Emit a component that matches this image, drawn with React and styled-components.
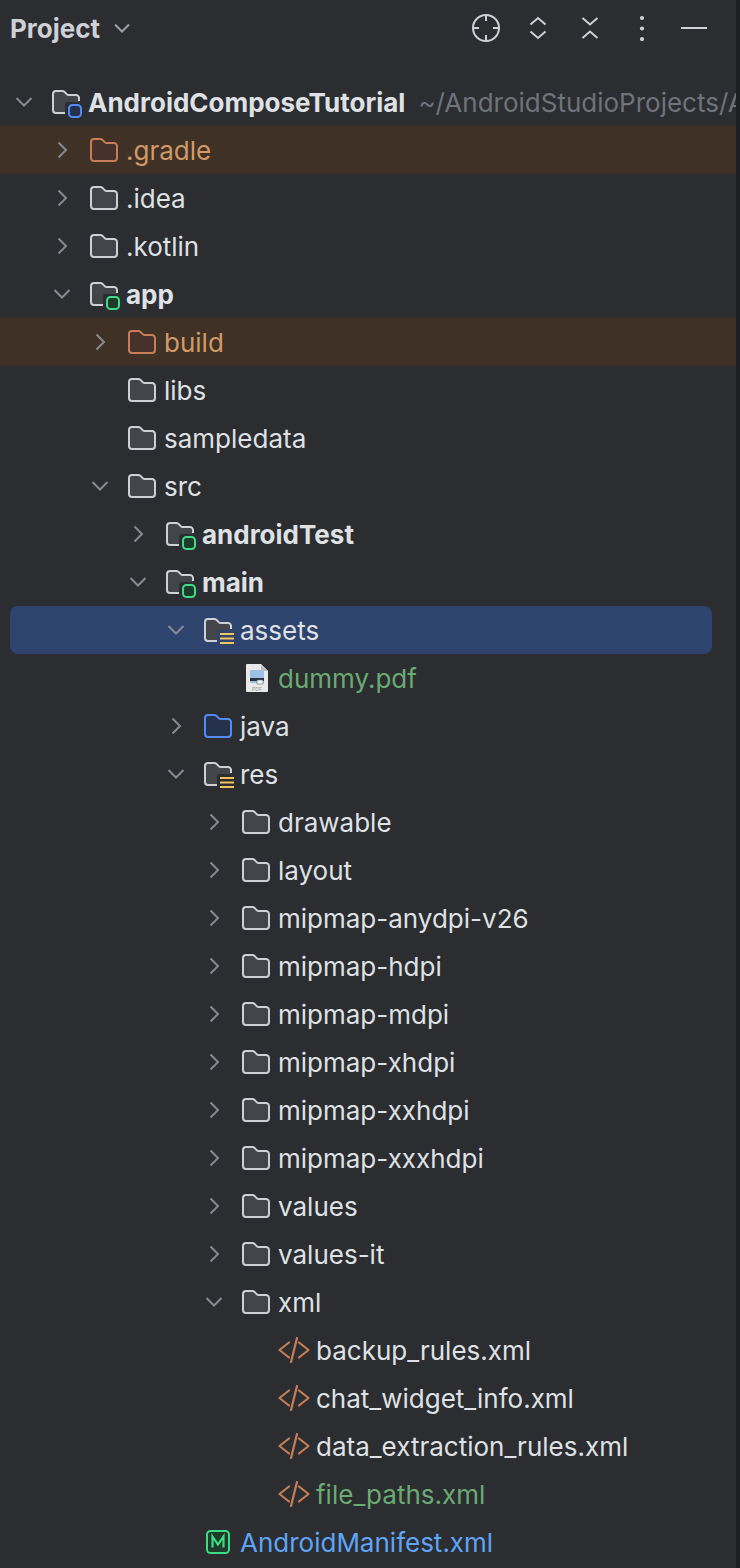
import React from "react";
import styled, { createGlobalStyle } from "styled-components";

const GlobalStyle = createGlobalStyle`
  html, body {
    margin: 0;
    padding: 0;
    background: #2b2d30;
  }
`;

const tree = [
  { level: 0, open: true, icon: "moduleBlue", name: "AndroidComposeTutorial", bold: true, path: "~/AndroidStudioProjects/AndroidComposeTutorial" },
  { level: 1, open: false, icon: "excluded", name: ".gradle", tone: "excluded" },
  { level: 1, open: false, icon: "folder", name: ".idea" },
  { level: 1, open: false, icon: "folder", name: ".kotlin" },
  { level: 1, open: true, icon: "moduleGreen", name: "app", bold: true },
  { level: 2, open: false, icon: "excluded", name: "build", tone: "excluded" },
  { level: 2, icon: "folder", name: "libs" },
  { level: 2, icon: "folder", name: "sampledata" },
  { level: 2, open: true, icon: "folder", name: "src" },
  { level: 3, open: false, icon: "moduleGreen", name: "androidTest", bold: true },
  { level: 3, open: true, icon: "moduleGreen", name: "main", bold: true },
  { level: 4, open: true, icon: "resource", name: "assets", selected: true },
  { level: 5, icon: "pdf", name: "dummy.pdf", tone: "added" },
  { level: 4, open: false, icon: "source", name: "java" },
  { level: 4, open: true, icon: "resource", name: "res" },
  { level: 5, open: false, icon: "folder", name: "drawable" },
  { level: 5, open: false, icon: "folder", name: "layout" },
  { level: 5, open: false, icon: "folder", name: "mipmap-anydpi-v26" },
  { level: 5, open: false, icon: "folder", name: "mipmap-hdpi" },
  { level: 5, open: false, icon: "folder", name: "mipmap-mdpi" },
  { level: 5, open: false, icon: "folder", name: "mipmap-xhdpi" },
  { level: 5, open: false, icon: "folder", name: "mipmap-xxhdpi" },
  { level: 5, open: false, icon: "folder", name: "mipmap-xxxhdpi" },
  { level: 5, open: false, icon: "folder", name: "values" },
  { level: 5, open: false, icon: "folder", name: "values-it" },
  { level: 5, open: true, icon: "folder", name: "xml" },
  { level: 6, icon: "xml", name: "backup_rules.xml" },
  { level: 6, icon: "xml", name: "chat_widget_info.xml" },
  { level: 6, icon: "xml", name: "data_extraction_rules.xml" },
  { level: 6, icon: "xml", name: "file_paths.xml", tone: "added" },
  { level: 4, icon: "manifest", name: "AndroidManifest.xml", tone: "modified" },
];

const folderPath =
  "M1 4a3 3 0 0 1 3-3h6.4a3 3 0 0 1 2.1.9l2.2 2.2a3 3 0 0 0 2.1.9H24a3 3 0 0 1 3 3v12a3 3 0 0 1-3 3H4a3 3 0 0 1-3-3z";

function Folder({ fill, stroke }) {
  return (
    <svg width="28" height="24" viewBox="0 0 28 24">
      <path d={folderPath} fill={fill} stroke={stroke} strokeWidth="2" />
    </svg>
  );
}

// folder with its lower right corner cut away for a badge
function NotchedFolder({ children }) {
  return (
    <svg width="28" height="24" viewBox="0 0 28 24" style={{ overflow: "visible" }}>
      <path
        d="M1 4a3 3 0 0 1 3-3h6.4a3 3 0 0 1 2.1.9l2.2 2.2a3 3 0 0 0 2.1.9H24a3 3 0 0 1 3 3v4H16a3 3 0 0 0-3 3v8H4a3 3 0 0 1-3-3z"
        fill="#43454a"
      />
      <path
        d="M13 23H4a3 3 0 0 1-3-3V4a3 3 0 0 1 3-3h6.4a3 3 0 0 1 2.1.9l2.2 2.2a3 3 0 0 0 2.1.9H24a3 3 0 0 1 3 3v3"
        fill="none"
        stroke="#ced0d6"
        strokeWidth="2"
      />
      {children}
    </svg>
  );
}

const icons = {
  folder: () => <Folder fill="#43454a" stroke="#ced0d6" />,
  excluded: () => <Folder fill="#46322a" stroke="#c77d55" />,
  source: () => <Folder fill="#25324d" stroke="#548af7" />,
  moduleBlue: () => (
    <NotchedFolder>
      <rect x="17" y="15" width="12" height="12" rx="3.5" fill="#25324d" stroke="#548af7" strokeWidth="2" />
    </NotchedFolder>
  ),
  moduleGreen: () => (
    <NotchedFolder>
      <rect x="17" y="15" width="12" height="12" rx="3.5" fill="#1e3a2b" stroke="#3ddc84" strokeWidth="2" />
    </NotchedFolder>
  ),
  resource: () => (
    <NotchedFolder>
      <path d="M16 16h14M16 20.500h14M16 25h14" stroke="#f2c55c" strokeWidth="2" />
    </NotchedFolder>
  ),
  pdf: () => (
    <svg width="24" height="28" viewBox="0 0 24 28" style={{ marginLeft: 3 }}>
      <path d="M1 1a1 1 0 0 1 1-1h14l7 7v20a1 1 0 0 1-1 1H2a1 1 0 0 1-1-1z" fill="#e9e9ea" />
      <path d="M16 0l7 7h-7z" fill="#bdbfc2" />
      <rect x="5" y="6" width="14" height="13" rx="1" fill="#9cc1e8" />
      <rect x="5" y="14" width="14" height="3" fill="#27303d" />
      <rect x="12" y="16" width="6" height="4" fill="#f5f6f7" stroke="#5f6469" strokeWidth="0.6" />
      <text x="12" y="26.500" textAnchor="middle" fontSize="5" fontFamily="Inter, sans-serif" fill="#8f9194">
        PDF
      </text>
    </svg>
  ),
  xml: () => (
    <svg width="32" height="26" viewBox="0 0 32 26" style={{ marginLeft: -2 }}>
      <path
        d="M11 5.500L1.500 13l9.500 7.500M21 5.500l9.500 7.500-9.500 7.500M19 1l-6 24"
        fill="none"
        stroke="#c77d55"
        strokeWidth="2.200"
        strokeLinecap="round"
        strokeLinejoin="round"
      />
    </svg>
  ),
  manifest: () => (
    <svg width="26" height="26" viewBox="0 0 26 26" style={{ marginLeft: 1 }}>
      <rect x="2" y="2" width="22" height="22" rx="3.500" fill="#1e3a2b" stroke="#3ddc84" strokeWidth="2" />
      <path d="M7.500 18.500V7.500l5.500 8 5.500-8v11" fill="none" stroke="#3ddc84" strokeWidth="2.200" />
    </svg>
  ),
};

function Chevron({ open }) {
  return (
    <svg width="24" height="24" viewBox="0 0 24 24">
      <path
        d={open ? "M4.500 8l7.500 7.500L19.500 8" : "M8.500 4.500L16 12l-7.500 7.500"}
        fill="none"
        stroke="#868a91"
        strokeWidth="2"
      />
    </svg>
  );
}

function App() {
  return (
    <>
      <GlobalStyle />
      <Panel>
        <Content>
          <Header>
            <TitleGroup>
              <Title>Project</Title>
              <svg width="18" height="10" viewBox="0 0 18 10">
                <path d="M2 1.500L9 8.500l7-7" fill="none" stroke="#9da0a8" strokeWidth="2" />
              </svg>
            </TitleGroup>
            <Toolbar>
              <ToolButton>
                <svg width="26" height="26" viewBox="1 1 26 26" style={{ overflow: "visible" }}>
                  <circle cx="14" cy="14" r="13" fill="none" stroke="#ced0d6" strokeWidth="2" />
                  <path d="M14 1v6M14 21v6M1 14h6M21 14h6" stroke="#ced0d6" strokeWidth="2" />
                </svg>
              </ToolButton>
              <ToolButton>
                <svg width="18" height="26" viewBox="0 0 18 26">
                  <path d="M1.500 9.500L9 3l7.500 6.500M1.500 16.500L9 23l7.500-6.500" fill="none" stroke="#ced0d6" strokeWidth="2" />
                </svg>
              </ToolButton>
              <ToolButton>
                <svg width="18" height="26" viewBox="0 0 18 26">
                  <path d="M1.500 3L9 9.500 16.500 3M1.500 23L9 16.500l7.500 6.500" fill="none" stroke="#ced0d6" strokeWidth="2" />
                </svg>
              </ToolButton>
              <ToolButton>
                <svg width="6" height="26" viewBox="0 0 6 26">
                  <circle cx="3" cy="3" r="2.100" fill="#ced0d6" />
                  <circle cx="3" cy="13.500" r="2.100" fill="#ced0d6" />
                  <circle cx="3" cy="24" r="2.100" fill="#ced0d6" />
                </svg>
              </ToolButton>
              <ToolButton>
                <svg width="26" height="4" viewBox="0 0 26 4">
                  <path d="M0 2h26" stroke="#ced0d6" strokeWidth="2" />
                </svg>
              </ToolButton>
            </Toolbar>
          </Header>
          <Tree>
            {tree.map((item) => {
              const Icon = icons[item.icon];
              return (
                <Row
                  key={item.name}
                  $level={item.level}
                  $selected={item.selected}
                  $excluded={item.tone === "excluded"}
                >
                  <ChevronSlot>
                    {item.open !== undefined && <Chevron open={item.open} />}
                  </ChevronSlot>
                  <IconSlot>
                    <Icon />
                  </IconSlot>
                  <Name $bold={item.bold} $tone={item.tone}>
                    {item.name}
                  </Name>
                  {item.path && <PathHint>{item.path}</PathHint>}
                </Row>
              );
            })}
          </Tree>
        </Content>
        <Divider />
      </Panel>
    </>
  );
}

const toneColors = {
  excluded: "#d19a66",
  added: "#6aab73",
  modified: "#5fa4f5",
};

const Panel = styled.div`
  display: flex;
  width: 740px;
  height: 1568px;
  overflow: hidden;
  background: #2b2d30;
  font-family: Inter, "Noto Sans", sans-serif;
  font-size: 26px;
  color: #dfe1e5;
`;

const Content = styled.div`
  flex: 1;
  min-width: 0;
`;

const Divider = styled.div`
  flex: none;
  width: 4px;
  background: #1e1f22;
`;

const Header = styled.div`
  display: flex;
  align-items: center;
  justify-content: space-between;
  box-sizing: border-box;
  height: 78px;
  padding: 0 29px 22px 10px;
`;

const TitleGroup = styled.div`
  display: flex;
  align-items: center;
  gap: 13px;
`;

const Title = styled.span`
  font-weight: 700;
  color: #ced0d6;
`;

const Toolbar = styled.div`
  display: flex;
  align-items: center;
  gap: 26px;
`;

const ToolButton = styled.div`
  display: flex;
  align-items: center;
  justify-content: center;
  min-width: 26px;
`;

const Tree = styled.div`
  display: flex;
  flex-direction: column;
`;

const Row = styled.div`
  display: flex;
  align-items: center;
  flex: none;
  height: 48px;
  white-space: nowrap;
  overflow: hidden;
  padding-left: ${(p) => 12 + p.$level * 38 - (p.$selected ? 10 : 0)}px;
  margin: ${(p) => (p.$selected ? "0 24px 0 10px" : "0")};
  border-radius: ${(p) => (p.$selected ? "8px" : "0")};
  background: ${(p) =>
    p.$selected ? "#2e436e" : p.$excluded ? "#3f3125" : "transparent"};
`;

const ChevronSlot = styled.div`
  display: flex;
  flex: none;
  justify-content: center;
  width: 24px;
  margin-right: 16px;
`;

const IconSlot = styled.div`
  display: flex;
  align-items: center;
  flex: none;
  width: 36px;
`;

const Name = styled.span`
  font-weight: ${(p) => (p.$bold ? 700 : 400)};
  color: ${(p) => toneColors[p.$tone] || "#dfe1e5"};
`;

const PathHint = styled.span`
  margin-left: 13px;
  color: #6f737a;
`;

export default App;
